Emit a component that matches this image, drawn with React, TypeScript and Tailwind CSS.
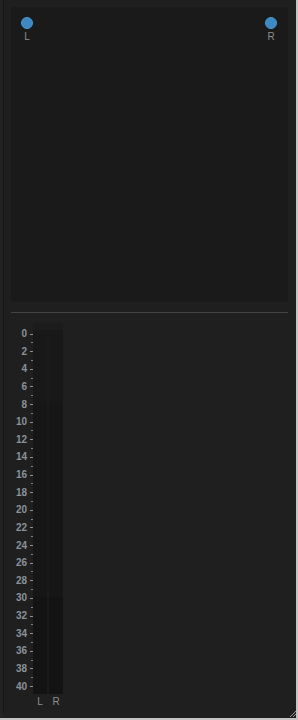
import React from "react";

const ticks = Array.from({ length: 41 }, (_, i) => i);

function Channel({ label }: { label: string }) {
  return (
    <div className="flex flex-col items-center">
      <div className="w-3 h-3 rounded-full bg-[#3b88c3] border border-[#4a97d2]"></div>
      <span className="mt-[2px] text-[10px] leading-[12px] text-[#8e8e8e]">{label}</span>
    </div>
  );
}

function MeterBar() {
  return (
    <div className="flex flex-col w-[14px] h-[371px]">
      <div className="h-[7px] bg-[#1c1c1c]"></div>
      <div className="h-[73px] bg-[#181818]"></div>
      <div className="h-[194px] bg-[#161616]"></div>
      <div className="flex-1 bg-[#131313]"></div>
    </div>
  );
}

export default function App() {
  return (
    <div
      className="w-[298px] h-[720px] bg-[#c4c4c4] relative"
      style={{ fontFamily: '"Liberation Sans", Arial, sans-serif' }}
    >
      <div className="w-[296px] h-[718px] bg-[#1f1f1f] flex">
        <div className="w-[3px] bg-[#222222]"></div>
        <div className="w-px h-[713px] bg-[#151515]"></div>
        <div className="flex-1 flex flex-col pl-[7px] pr-[8px] pt-[7px]">
          {/* panner */}
          <div className="h-[295px] bg-[#1a1a1a] flex justify-between items-start pt-[10px] pl-[10px] pr-[11px]">
            <Channel label="L" />
            <Channel label="R" />
          </div>
          <div className="mt-[10px] h-px bg-[#444444]"></div>

          {/* meter */}
          <div className="flex mt-[10px]">
            <div className="w-[22px] flex flex-col pt-[6.6px]">
              {ticks.map((t) => (
                <div key={t} className="h-[8.825px] flex items-center justify-end">
                  {t % 2 === 0 ? (
                    <>
                      <span className="text-[10px] leading-none font-bold text-[#8a929b]">{t}</span>
                      <div className="ml-[3px] w-[3px] h-px bg-[#8a929b]"></div>
                    </>
                  ) : (
                    <div className="w-[2px] h-px bg-[#7a828a]"></div>
                  )}
                </div>
              ))}
            </div>
            <div className="flex flex-col">
              <div className="flex gap-[2px] bg-[#1a1a1a]">
                <MeterBar />
                <MeterBar />
              </div>
              <div className="flex gap-[2px] mt-[2px]">
                <span className="w-[14px] text-center text-[10px] leading-[12px] text-[#8e8e8e]">L</span>
                <span className="w-[14px] text-center text-[10px] leading-[12px] text-[#8e8e8e]">R</span>
              </div>
            </div>
          </div>
        </div>
      </div>
      {/* resize grip */}
      <svg className="absolute right-[2px] bottom-[3px]" width="6" height="6" viewBox="0 0 6 6">
        <line x1="0" y1="6" x2="6" y2="0" stroke="#9a9a9a" strokeWidth="1" />
        <line x1="3" y1="6" x2="6" y2="3" stroke="#9a9a9a" strokeWidth="1" />
      </svg>
    </div>
  );
}
